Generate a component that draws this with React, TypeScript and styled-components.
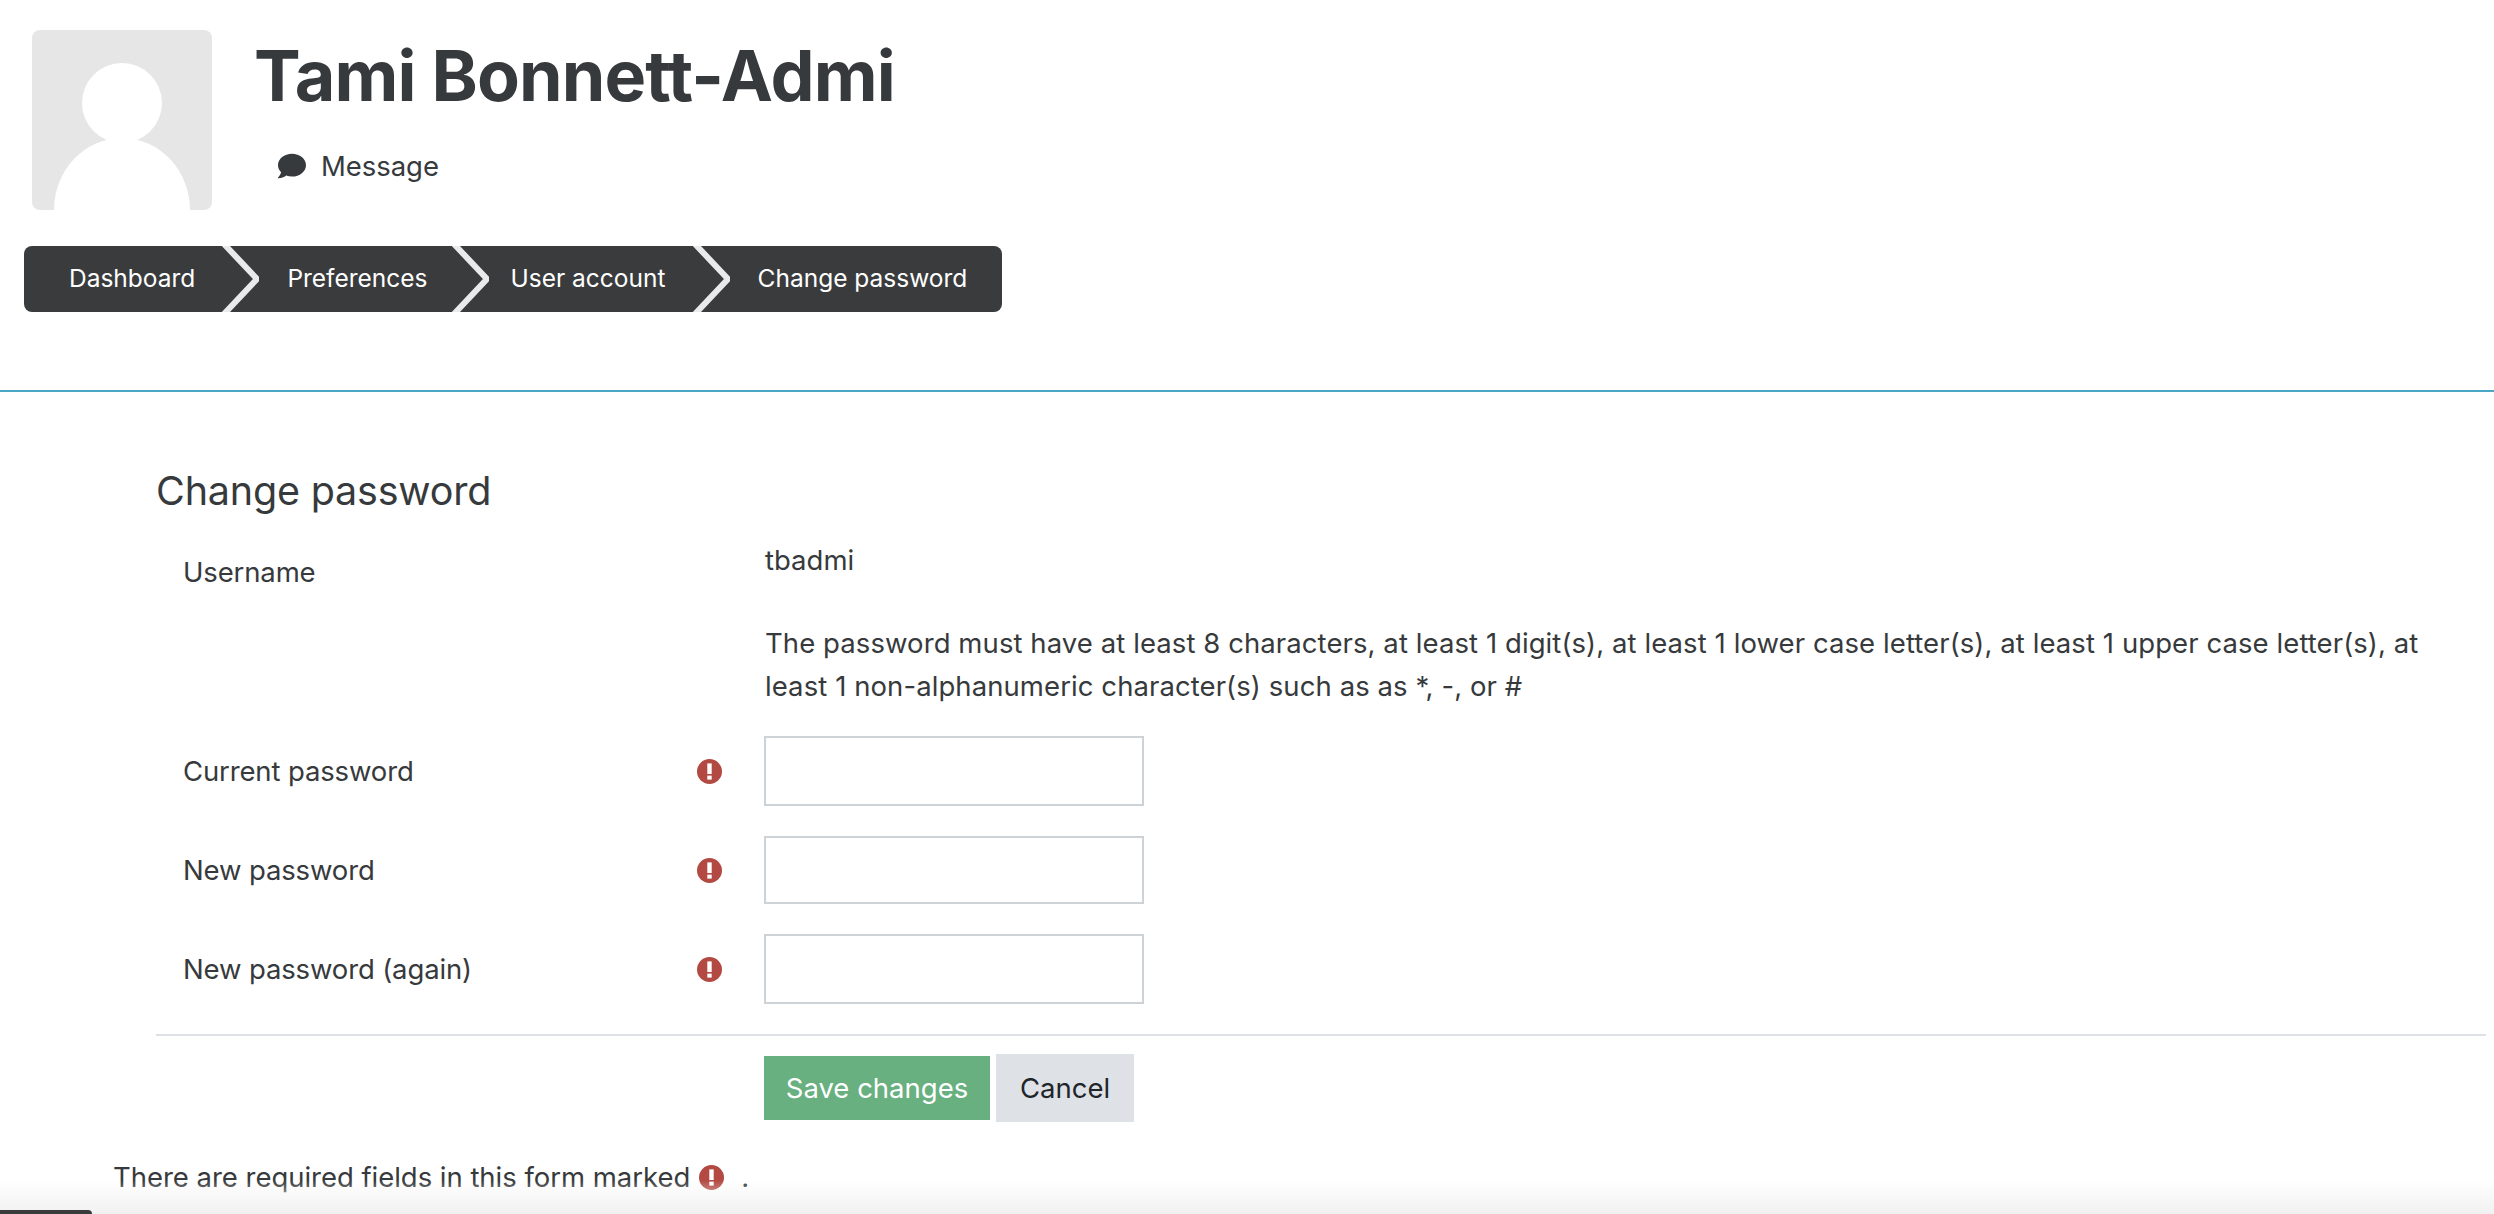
import React from "react";
import styled, { createGlobalStyle } from "styled-components";
import { FaComment } from "react-icons/fa";

const Global = createGlobalStyle`
  html, body { margin: 0; padding: 0; background: #fff; }
  body { font-family: Inter, "Noto Sans", "Liberation Sans", sans-serif; color: #373a3c; }
  * { box-sizing: border-box; }
`;

const Page = styled.div`
  position: relative;
  width: 2494px;
  height: 1214px;
  overflow: hidden;
`;
const Header = styled.header`
  display: flex;
  padding: 30px 0 0 32px;
  height: 210px;
`;
const Avatar = styled.svg`
  width: 180px;
  height: 180px;
  flex: none;
  border-radius: 8px;
  background: #e6e6e6;
`;
const Identity = styled.div`
  display: flex;
  flex-direction: column;
  margin-left: 42px;
`;
const Name = styled.h1`
  margin: 4px 0 0;
  font-size: 70px;
  line-height: 84px;
  font-weight: 700;
  letter-spacing: -0.85px;
  color: #373a3c;
`;
const MessageLink = styled.div`
  display: flex;
  align-items: center;
  margin: 26px 0 0 24px;
  font-size: 27.5px;
  line-height: 44px;
  letter-spacing: -0.05px;
  svg { width: 28px; height: 28px; margin-right: 15px; color: #373a3c; }
`;
const Breadcrumb = styled.nav`
  display: flex;
  align-items: stretch;
  width: 978px;
  height: 66px;
  margin: 36px 0 0 24px;
  border-radius: 8px;
  background: #3a3b3d;
  color: #fff;
  font-size: 24.5px;
  white-space: nowrap;
`;
const Crumb = styled.span<{ $left: number; $right: number }>`
  display: flex;
  align-items: center;
  padding: 0 ${(p) => p.$right}px 2px ${(p) => p.$left}px;
`;
const Chevron = styled.svg`
  width: 37px;
  height: 66px;
  flex: none;
`;
const Divider = styled.div`
  height: 2px;
  margin-top: 78px;
  background: #4aa6c4;
`;
const Form = styled.form`
  padding: 0 8px 0 156px;
`;
const Heading = styled.h2`
  margin: 72px 0 0;
  font-size: 39.5px;
  line-height: 54px;
  font-weight: 400;
  letter-spacing: -0.2px;
`;
const Row = styled.div<{ $height: number; $top?: number }>`
  display: flex;
  align-items: center;
  height: ${(p) => p.$height}px;
  margin-top: ${(p) => p.$top ?? 0}px;
`;
const Label = styled.label`
  width: 541px;
  padding: 0 0 0 27px;
  flex: none;
  font-size: 27.5px;
  letter-spacing: -0.14px;
`;
const Required = styled.svg`
  width: 25px;
  height: 25px;
  flex: none;
`;
const RequiredSlot = styled.span`
  display: flex;
  width: 67px;
  flex: none;
`;
const UsernameRow = styled.div`
  display: flex;
  align-items: flex-start;
  margin-top: 11px;
`;
const UsernameLabel = styled(Label)`
  width: 608px;
  margin-top: 23px;
  line-height: 40px;
`;
const StaticText = styled.div`
  font-size: 27.5px;
  line-height: 43px;
  margin: 10px 0 0 1px;
`;
const Username = styled.div`
  height: 83px;
`;
const Help = styled.div`
  width: 1690px;
  letter-spacing: 0.08px;
`;
const Input = styled.input`
  width: 380px;
  height: 100%;
  border: 2px solid #ccd2d6;
  border-radius: 0;
  background: #fff;
  padding: 0;
  margin: 0;
  outline: none;
`;
const Rule = styled.hr`
  margin: 30px 0 0;
  border: 0;
  height: 2px;
  background: #dee2e6;
`;
const Actions = styled.div`
  display: flex;
  align-items: flex-start;
  gap: 6px;
  margin: 18px 0 0 608px;
  height: 68px;
`;
const Button = styled.button<{ $primary?: boolean }>`
  border: 0;
  border-radius: 0;
  font: inherit;
  font-size: 27.5px;
  padding: 0;
  width: ${(p) => (p.$primary ? 226 : 138)}px;
  height: ${(p) => (p.$primary ? 64 : 68)}px;
  margin-top: ${(p) => (p.$primary ? 2 : 0)}px;
  background: ${(p) => (p.$primary ? "#68b07f" : "#dee2e6")};
  color: ${(p) => (p.$primary ? "#fff" : "#212529")};
`;
const Note = styled.p`
  display: flex;
  align-items: center;
  margin: 33px 0 0 113px;
  font-size: 27.5px;
  line-height: 44px;
  letter-spacing: -0.03px;
`;
const NoteIcon = styled(Required)`
  margin: 0 17px 0 9px;
`;
const BottomFade = styled.div`
  position: absolute;
  left: 0;
  right: 0;
  bottom: 0;
  height: 34px;
  background: linear-gradient(rgba(242,242,242,0), #f1f1f1);
  pointer-events: none;
`;
const DockEdge = styled.div`
  position: absolute;
  left: 0;
  bottom: 0;
  width: 92px;
  height: 4px;
  background: #3a3b3d;
  border-top-right-radius: 6px;
`;

const Bang = () => (
  <>
    <circle cx="12.5" cy="12.5" r="12.5" fill="#b24943" />
    <rect x="10.3" y="4.4" width="4.4" height="10.6" fill="#fff" />
    <rect x="10.3" y="16.6" width="4.4" height="4" fill="#fff" />
  </>
);
const RequiredIcon = () => (
  <RequiredSlot>
    <Required viewBox="0 0 25 25"><Bang /></Required>
  </RequiredSlot>
);
const Sep = () => (
  <Chevron viewBox="0 0 37 66">
    <polyline points="0,-2 33,33 0,68" fill="none" stroke="#e9eaec" strokeWidth="6" transform="translate(2 0)" />
  </Chevron>
);

export default function App() {
  return (
    <Page>
      <Global />
      <Header>
        <Avatar viewBox="0 0 180 180">
          <circle cx="90" cy="73" r="40" fill="#fff" />
          <ellipse cx="90" cy="180" rx="68" ry="72" fill="#fff" />
        </Avatar>
        <Identity>
          <Name>Tami Bonnett-Admi</Name>
          <MessageLink><FaComment />Message</MessageLink>
        </Identity>
      </Header>
      <Breadcrumb>
        <Crumb $left={45} $right={27}>Dashboard</Crumb><Sep />
        <Crumb $left={28} $right={24}>Preferences</Crumb><Sep />
        <Crumb $left={22} $right={27}>User account</Crumb><Sep />
        <Crumb $left={28} $right={27}>Change password</Crumb>
      </Breadcrumb>
      <Divider />
      <Form>
        <Heading>Change password</Heading>
        <UsernameRow>
          <UsernameLabel>Username</UsernameLabel>
          <StaticText>
            <Username>tbadmi</Username>
            <Help>The password must have at least 8 characters, at least 1 digit(s), at least 1 lower case letter(s), at least 1 upper case letter(s), at least 1 non-alphanumeric character(s) such as as *, -, or #</Help>
          </StaticText>
        </UsernameRow>
        <Row $height={70} $top={28}>
          <Label>Current password</Label><RequiredIcon /><Input type="password" />
        </Row>
        <Row $height={68} $top={30}>
          <Label>New password</Label><RequiredIcon /><Input type="password" />
        </Row>
        <Row $height={70} $top={30}>
          <Label>New password (again)</Label><RequiredIcon /><Input type="password" />
        </Row>
        <Rule />
        <Actions>
          <Button type="button" $primary>Save changes</Button>
          <Button type="button">Cancel</Button>
        </Actions>
      </Form>
      <Note>
        There are required fields in this form marked
        <NoteIcon viewBox="0 0 25 25"><Bang /></NoteIcon>.
      </Note>
      <BottomFade />
      <DockEdge />
    </Page>
  );
}
